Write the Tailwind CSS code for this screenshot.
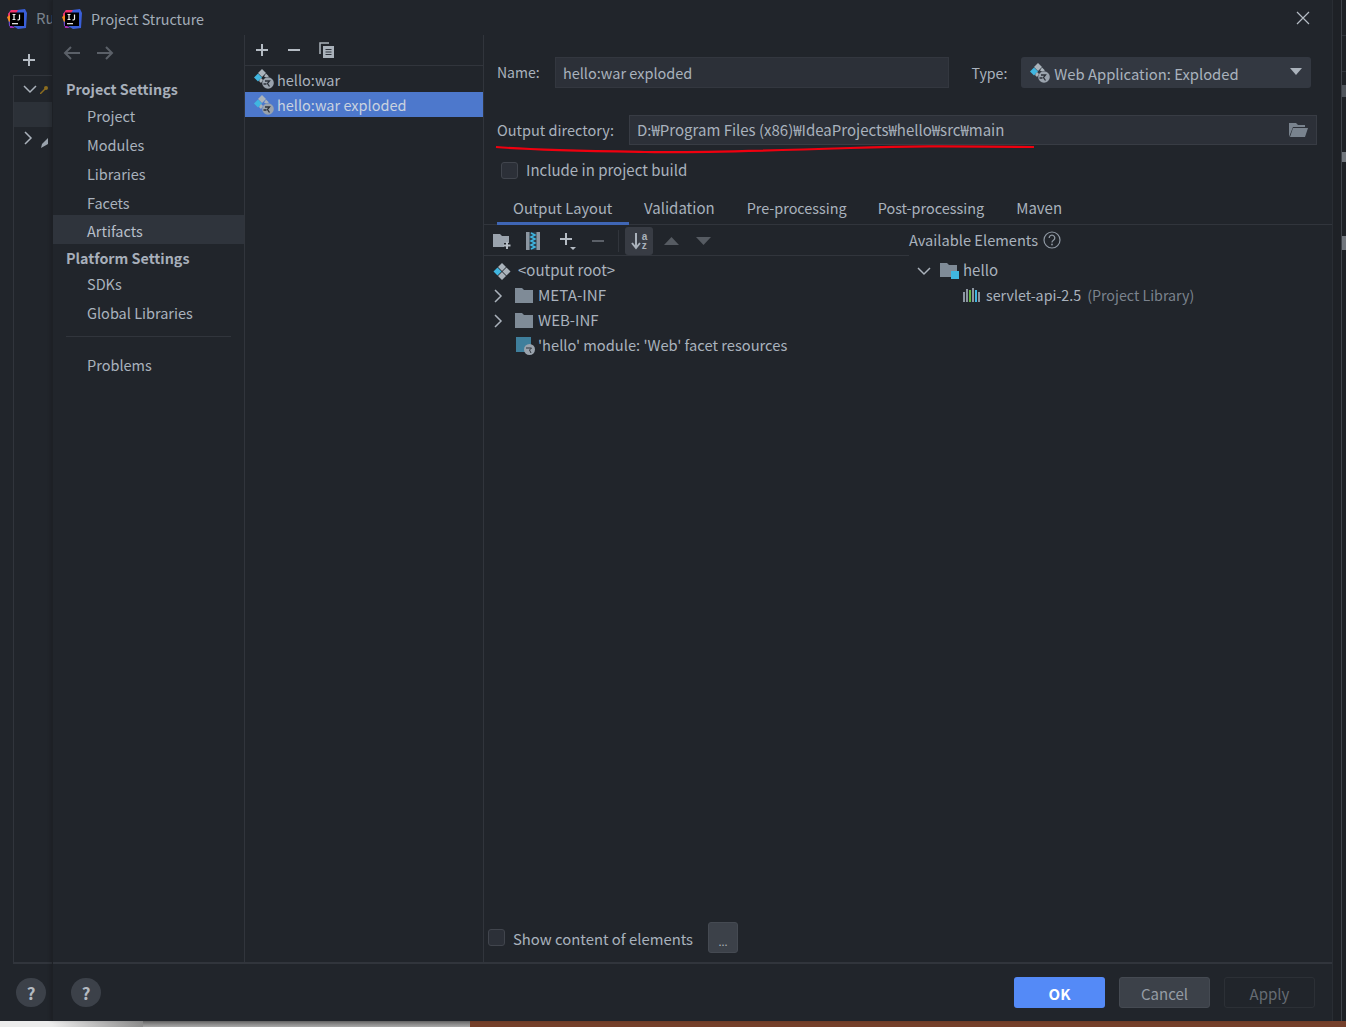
<!DOCTYPE html>
<html lang="en">
<head>
    <meta charset="UTF-8">
    <title>Project Structure</title>
    <script src="https://cdn.jsdelivr.net/npm/@tailwindcss/browser@4"></script>
</head>
<body class="bg-[#21252b] font-['Noto_Sans_CJK_KR','Noto_Sans',sans-serif] text-[14.5px] text-[#a9b2bd]">
    <svg class="hidden">
        <symbol id="idea" viewBox="0 0 20 20">
            <path d="M1 5 4 1h6l8-1 2 4-1 15-8 1-5-3H2z" fill="#3a5fd9"/>
            <path d="M1 5 4 1h7L5 11 1 10z" fill="#f0306a"/>
            <path d="M0 8l3-2 2 5-3 2z" fill="#f78a1f"/>
            <path d="M2 13l3 4 3 2H3z" fill="#a02fb5"/>
            <rect x="3" y="3.500" width="14" height="13.500" fill="#000"/>
            <rect x="5" y="14" width="6" height="1.300" fill="#ddd"/>
            <path d="M5.500 5.500h3M7 5.500v5M5.500 10.500h3M12.500 5.500v4.500q0 1-2 .8" stroke="#eee" stroke-width="1.200" fill="none"/>
        </symbol>
        <symbol id="artifact" viewBox="0 0 20 20">
            <path d="M8 0l4 4-4 4-4-4z" fill="#aab3bb"/>
            <path d="M4 4.500l4 4-4 4-4-4z" fill="#40b6e0"/>
            <path d="M12 4.500l3 3-3 1-2-1z" fill="#aab3bb"/>
            <path d="M7 9l2 2-2 3-2-2z" fill="#aab3bb"/>
            <circle cx="14" cy="14" r="5.800" fill="#9aa3ad"/>
            <path d="M11 12h4.500l-2 2.500 2 3M9.500 15h3" stroke="#2d323a" stroke-width="1.300" fill="none"/>
        </symbol>
        <symbol id="folder" viewBox="0 0 18 15">
            <path d="M0 0h7l2 2h9v13H0z" fill="#7f8b97"/>
        </symbol>
        <symbol id="chev-r" viewBox="0 0 10 14">
            <path d="M2 1l6 6-6 6" stroke="#aab2bb" stroke-width="1.500" fill="none"/>
        </symbol>
        <symbol id="chev-d" viewBox="0 0 14 10">
            <path d="M1 2l6 6 6-6" stroke="#aab2bb" stroke-width="1.500" fill="none"/>
        </symbol>
    </svg>

    <div class="relative w-[1346px] h-[1027px] overflow-hidden bg-[#21252b]">
        <!-- desktop strip under the windows -->
        <div class="absolute left-0 right-0 bottom-0 h-[6px] flex">
            <div class="w-[52px] bg-[#ececec]"></div>
            <div class="w-[91px] bg-linear-to-r from-[#ececec] to-[#8d8d8d]"></div>
            <div class="w-[327px] bg-linear-to-b from-[#6a6a6a] to-[#a8a8a8]"></div>
            <div class="flex-1 bg-[#75402b]"></div>
        </div>

        <!-- run config window behind the dialog -->
        <div class="absolute left-0 top-0 w-[1346px] h-[1021px] bg-[#21252b]">
            <div class="h-[35px] flex items-center pl-[7px] gap-[9px] pt-[2px]">
                <svg class="w-[20px] h-[20px]"><use href="#idea"/></svg>
                <span class="text-[#79828c] text-[15px]">Ru</span>
            </div>
            <svg class="absolute left-[22px] top-[53px] w-[14px] h-[14px]" viewBox="0 0 14 14"><path d="M7 1v12M1 7h12" stroke="#b5bcc4" stroke-width="2"/></svg>
            <div class="absolute left-[13px] top-[75px] w-[39px] h-[889px] border-l border-t border-b-2 border-[#31353c]">
                <div class="h-[26px] pl-[9px] flex items-center gap-[3px]">
                    <svg class="w-[14px] h-[10px]"><use href="#chev-d"/></svg>
                    <svg class="w-[8px] h-[8px] mt-[2px]" viewBox="0 0 8 8"><path d="M0 8l5-5" stroke="#8c6d1f" stroke-width="1.500"/><circle cx="6" cy="2" r="2" fill="#8c6d1f"/></svg>
                </div>
                <div class="h-[25px] bg-[#2c3138]"></div>
                <div class="h-[25px] pl-[9px] flex items-center gap-[8px]">
                    <svg class="w-[10px] h-[14px] mb-[3px]"><use href="#chev-r"/></svg>
                    <svg class="w-[8px] h-[10px] mt-[6px]" viewBox="0 0 8 10"><path d="M0 10l1-4 6-6v6z" fill="#9aa3ad"/></svg>
                </div>
            </div>
            <div class="absolute left-[16px] top-[978px] w-[30px] h-[29px] rounded-full bg-[#3c4149] flex items-center justify-center font-bold text-[17px] text-[#b4bac1]">?</div>
        </div>

        <!-- right strip pieces of the window behind -->
        <div class="absolute left-[1332px] top-0 w-[14px] h-[1021px] bg-[#1e2126] border-l border-[#2a2e34]">
            <div class="absolute left-[8px] top-0 h-full w-px bg-[#3f444b]"></div>
            <div class="absolute left-[9px] top-[35px] w-[5px] h-px bg-[#31353c]"></div>
            <div class="absolute left-[9px] top-[71px] w-[5px] h-px bg-[#31353c]"></div>
            <div class="absolute left-[9px] top-[85px] w-[4px] h-[12px] bg-[#50555c]"></div>
            <div class="absolute left-[9px] top-[152px] w-[4px] h-[10px] bg-[#71767d]"></div>
            <div class="absolute left-[9px] top-[236px] w-[4px] h-[14px] bg-[#71767d]"></div>
        </div>

        <!-- Project Structure dialog -->
        <div class="absolute left-[52px] top-0 w-[1280px] h-[1021px] bg-[#21252b] flex flex-col border-l border-[#1d2025] shadow-[-2px_0_3px_rgba(0,0,0,0.15)]">
            <div class="h-[35px] shrink-0 flex items-center pl-[9px] pr-[22px] pt-[2px]">
                <svg class="w-[20px] h-[20px]"><use href="#idea"/></svg>
                <span class="ml-[9px] pt-[1px] text-[#a3adb9] text-[14.300px]">Project Structure</span>
                <svg class="ml-auto mb-[2px] w-[14px] h-[14px]" viewBox="0 0 14 14"><path d="M1 1l12 12M13 1L1 13" stroke="#b5bcc4" stroke-width="1.200"/></svg>
            </div>

            <div class="flex-1 flex min-h-0 border-b-2 border-[#31353c]">
                <!-- sidebar -->
                <div class="w-[192px] shrink-0 border-r border-[#31353c] flex flex-col">
                    <div class="h-[36px] shrink-0 flex items-center pl-[10px] gap-[15px]">
                        <svg class="w-[18px] h-[14px]" viewBox="0 0 18 14"><path d="M17 7H2M8 1L2 7l6 6" stroke="#5b6068" stroke-width="2" fill="none"/></svg>
                        <svg class="w-[18px] h-[14px]" viewBox="0 0 18 14"><path d="M1 7h15M10 1l6 6-6 6" stroke="#5b6068" stroke-width="2" fill="none"/></svg>
                    </div>
                    <div class="pl-[13px] h-[29px] mt-[3px] flex items-center font-bold text-[14.300px] text-[#a7afba]">Project Settings</div>
                    <div class="pl-[34px] h-[26px] flex items-center">Project</div>
                    <div class="pl-[34px] h-[29px] mt-[1px] flex items-center">Modules</div>
                    <div class="pl-[34px] h-[29px] flex items-center">Libraries</div>
                    <div class="pl-[34px] h-[27px] pt-[3px] flex items-center">Facets</div>
                    <div class="pl-[34px] h-[29px] pt-[3px] flex items-center bg-[#2f343c] text-[#b7bfc9]">Artifacts</div>
                    <div class="pl-[13px] h-[29px] pb-[2px] flex items-center font-bold text-[14.300px] text-[#a7afba]">Platform Settings</div>
                    <div class="pl-[34px] h-[23px] pb-[2px] flex items-center">SDKs</div>
                    <div class="pl-[34px] h-[29px] mt-[2px] flex items-center">Global Libraries</div>
                    <div class="mx-[13px] mt-[9px] border-t border-[#31353c]"></div>
                    <div class="pl-[34px] h-[29px] mt-[14px] pb-[2px] flex items-center">Problems</div>
                </div>

                <!-- artifact list -->
                <div class="w-[239px] shrink-0 border-r border-[#31353c] flex flex-col">
                    <div class="h-[31px] shrink-0 border-b border-[#31353c] flex items-center pl-[10px] gap-[18px]">
                        <svg class="w-[14px] h-[14px]" viewBox="0 0 14 14"><path d="M7 1v12M1 7h12" stroke="#b5bcc4" stroke-width="2"/></svg>
                        <svg class="w-[14px] h-[14px]" viewBox="0 0 14 14"><path d="M1 7h12" stroke="#b5bcc4" stroke-width="2"/></svg>
                        <svg class="w-[16px] h-[16px]" viewBox="0 0 16 16"><path d="M1 12V1h9" stroke="#aab2bb" stroke-width="1.500" fill="none"/><path d="M4 4h11v12H4z" fill="#aab2bb"/><path d="M6.500 7.500h6M6.500 10h6M6.500 12.500h6" stroke="#2d323a"/></svg>
                    </div>
                    <div class="h-[26px] pl-[9px] flex items-center gap-[3px]">
                        <svg class="w-[20px] h-[20px]"><use href="#artifact"/></svg><span class="pt-[2px]">hello:war</span>
                    </div>
                    <div class="h-[25px] pl-[9px] flex items-center gap-[3px] bg-[#4d78cc] text-[#c9d2df]">
                        <svg class="w-[20px] h-[20px]"><use href="#artifact"/></svg>hello:war exploded
                    </div>
                </div>

                <!-- artifact detail -->
                <div class="flex-1 min-w-0 flex flex-col">
                    <div class="pl-[13px] pr-[21px] mt-[22px] h-[31px] flex items-center">
                        <span class="w-[58px] text-[14px]">Name:</span>
                        <div class="w-[395px] h-full bg-[#2c3038] border border-[#33373f] pl-[7px] flex items-center">hello:war exploded</div>
                        <span class="ml-[22px] w-[50px] pt-[2px] text-[14.200px]">Type:</span>
                        <div class="w-[290px] h-full rounded-[3px] bg-[#333841] pl-[9px] pr-[9px] flex items-center gap-[4px]">
                            <svg class="w-[20px] h-[20px]"><use href="#artifact"/></svg>
                            <span class="pt-[4px] text-[14.800px]">Web Application: Exploded</span>
                            <svg class="ml-auto w-[12px] h-[7px] mb-[3px]" viewBox="0 0 12 7"><path d="M0 0h12L6 7z" fill="#aab2bb"/></svg>
                        </div>
                    </div>
                    <div class="pl-[13px] pr-[15px] mt-[27px] h-[30px] flex items-center">
                        <span class="w-[132px]">Output directory:</span>
                        <div class="flex-1 h-full bg-[#2c3038] border border-[#383c44] pl-[7px] pr-[8px] flex items-center text-[15px]">
                            <span>D:₩Program Files (x86)₩IdeaProjects₩hello₩src₩main</span>
                            <svg class="ml-auto w-[19px] h-[14px]" viewBox="0 0 19 14"><path d="M0 14V0h7l2 2h7v2H4z" fill="#79838e"/><path d="M4 5h15l-3 9H1z" fill="#79838e"/></svg>
                        </div>
                    </div>
                    <div class="pl-[17px] mt-[15px] h-[21px] flex items-center gap-[8px] text-[15px]">
                        <span class="w-[17px] h-[17px] rounded-[3px] bg-[#2c3038] border border-[#41454d]"></span>
                        <span>Include in project build</span>
                    </div>

                    <!-- tabs -->
                    <div class="mt-[5px] h-[39px] pl-[13px] flex items-end border-b border-[#31353c] shrink-0">
                        <div class="w-[132px] h-[29px] pl-[16px] pt-[1px] text-[14.700px] border-b-[3px] border-[#3f66b5] relative top-[1px]">Output Layout</div>
                        <div class="ml-[15px] h-[29px] pt-[2px] text-[15px]">Validation</div>
                        <div class="ml-[32px] h-[29px] pt-[2px] text-[14.400px]">Pre-processing</div>
                        <div class="ml-[31px] h-[29px] pt-[2px] text-[14.450px]">Post-processing</div>
                        <div class="ml-[32px] h-[29px] pt-[2px] text-[15px]">Maven</div>
                    </div>

                    <div class="flex-1 min-h-0 flex">
                        <!-- output tree -->
                        <div class="w-[425px] shrink-0 flex flex-col">
                            <div class="h-[31px] shrink-0 pt-[1px] border-b border-[#31353c] flex items-center pl-[9px]">
                                <svg class="w-[18px] h-[16px]" viewBox="0 0 18 16"><path d="M0 1h7l2 2h7v7h-5v4H0z" fill="#9aa3ad"/><path d="M14 9v7M10.500 12.500h7" stroke="#b5bcc4" stroke-width="2"/></svg>
                                <svg class="ml-[15px] w-[14px] h-[18px]" viewBox="0 0 14 18"><rect width="14" height="18" fill="#8c96a1"/><rect x="3.500" width="7" height="18" fill="#2a3a47"/><path d="M5 1l4 2-4 2 4 2-4 2 4 2-4 2 4 2-4 2" stroke="#40b6e0" stroke-width="1.500" fill="none"/></svg>
                                <svg class="ml-[19px] w-[19px] h-[18px]" viewBox="0 0 19 18"><path d="M7 1v12M1 7h12" stroke="#b5bcc4" stroke-width="2"/><path d="M11 15h6l-3 3z" fill="#b5bcc4"/></svg>
                                <svg class="ml-[13px] w-[14px] h-[14px]" viewBox="0 0 14 14"><path d="M1 7h12" stroke="#5b6068" stroke-width="2"/></svg>
                                <span class="ml-[13px] w-px h-[22px] bg-[#31353c]"></span>
                                <div class="ml-[6px] w-[28px] h-[28px] rounded-[3px] bg-[#383c44] flex items-center justify-center gap-[1px]">
                                    <svg class="w-[10px] h-[18px]" viewBox="0 0 10 18"><path d="M5 1v14M1 11l4 5 4-5" stroke="#aab2bb" stroke-width="2" fill="none"/></svg>
                                    <div class="flex flex-col font-bold text-[10px] leading-[9px] text-[#aab2bb] font-['Liberation_Sans',sans-serif]"><span>a</span><span>z</span></div>
                                </div>
                                <svg class="ml-[11px] w-[15px] h-[8px]" viewBox="0 0 15 8"><path d="M0 8L7.500 0 15 8z" fill="#565b62"/></svg>
                                <svg class="ml-[17px] w-[15px] h-[8px]" viewBox="0 0 15 8"><path d="M0 0h15L7.500 8z" fill="#565b62"/></svg>
                            </div>
                            <div class="h-[25px] mt-[2px] pl-[9px] flex items-center text-[15px]">
                                <svg class="w-[18px] h-[18px]" viewBox="0 0 18 18"><path d="M9 1l4 4-4 4-4-4z" fill="#aab3bb"/><path d="M4.500 5.500l4 4-4 4-4-4z" fill="#40b6e0"/><path d="M13.500 5.500l4 4-4 4-4-4z" fill="#aab3bb"/><path d="M9 10l4 4-4 4-4-4z" fill="#aab3bb"/></svg>
                                <span class="ml-[7px]">&lt;output root&gt;</span>
                            </div>
                            <div class="h-[25px] pl-[9px] flex items-center text-[15.200px]">
                                <svg class="w-[10px] h-[14px]"><use href="#chev-r"/></svg>
                                <svg class="ml-[12px] w-[18px] h-[15px]"><use href="#folder"/></svg>
                                <span class="ml-[5px] pb-[2px]">META-INF</span>
                            </div>
                            <div class="h-[25px] pl-[9px] flex items-center text-[15px]">
                                <svg class="w-[10px] h-[14px]"><use href="#chev-r"/></svg>
                                <svg class="ml-[12px] w-[18px] h-[15px]"><use href="#folder"/></svg>
                                <span class="ml-[5px]">WEB-INF</span>
                            </div>
                            <div class="h-[25px] pl-[32px] flex items-center text-[14.700px]">
                                <svg class="w-[20px] h-[18px]" viewBox="0 0 20 18"><rect width="15" height="15" fill="#3f7f9c"/><circle cx="13.500" cy="12.500" r="5.500" fill="#9aa3ad"/><path d="M10 11h5.500l-2 2 1.500 3" stroke="#2d323a" fill="none"/></svg>
                                <span class="ml-[2px]">'hello' module: 'Web' facet resources</span>
                            </div>
                            <div class="mt-auto mb-[9px] pl-[4px] flex items-center">
                                <span class="w-[17px] h-[17px] rounded-[3px] bg-[#2c3038] border border-[#41454d]"></span>
                                <span class="ml-[8px] pt-[4px] text-[14.850px]">Show content of elements</span>
                                <div class="ml-[15px] w-[30px] h-[31px] rounded-[3px] bg-[#3c4149] border border-[#454a52] flex items-end justify-center text-[11px] pb-[3px]">...</div>
                            </div>
                        </div>

                        <!-- available elements -->
                        <div class="flex-1 min-w-0">
                            <div class="h-[31px] flex items-center gap-[5px] text-[14.650px]">
                                <span class="pb-[2px]">Available Elements</span>
                                <svg class="w-[18px] h-[18px] mb-[1px]" viewBox="0 0 18 18"><circle cx="9" cy="9" r="8" fill="none" stroke="#8f98a3" stroke-width="1.200"/><path d="M6.200 7a2.800 2.800 0 1 1 4.300 2.300C9.500 10 9 10.500 9 11.500" stroke="#8f98a3" stroke-width="1.300" fill="none"/><circle cx="9" cy="13.500" r=".9" fill="#8f98a3"/></svg>
                            </div>
                            <div class="h-[25px] mt-[2px] pl-[8px] flex items-center text-[15px]">
                                <svg class="w-[14px] h-[10px]"><use href="#chev-d"/></svg>
                                <svg class="ml-[9px] w-[19px] h-[16px]" viewBox="0 0 19 16"><path d="M0 0h7l2 2h8v12H0z" fill="#7f8b97"/><rect x="11" y="8" width="8" height="8" fill="#40b6e0"/></svg>
                                <span class="ml-[4px]">hello</span>
                            </div>
                            <div class="h-[25px] pl-[54px] flex items-center text-[14.250px]">
                                <svg class="w-[18px] h-[15px]" viewBox="0 0 18 15"><rect x="0" y="4" width="2" height="10" fill="#8c96a1"/><rect x="3" y="1" width="2" height="13" fill="#8c96a1"/><rect x="6" y="2" width="2" height="12" fill="#62b543"/><rect x="9" y="0" width="2" height="14" fill="#8c96a1"/><rect x="12" y="2" width="2" height="12" fill="#40b6e0"/><rect x="15" y="4" width="2" height="10" fill="#8c96a1"/></svg>
                                <span class="ml-[5px] pb-[2px]">servlet-api-2.5</span>
                                <span class="ml-[6px] pb-[2px] text-[#7b838d]">(Project Library)</span>
                            </div>
                        </div>
                    </div>
                </div>
            </div>

            <!-- footer -->
            <div class="h-[57px] shrink-0 flex items-center pl-[18px] pr-[17px] text-[15px]">
                <div class="w-[30px] h-[29px] rounded-full bg-[#3c4149] flex items-center justify-center font-bold text-[17px] text-[#b4bac1]">?</div>
                <button class="ml-auto w-[91px] h-[31px] pt-[4px] rounded-[3px] bg-[#548af7] text-white font-bold">OK</button>
                <button class="ml-[14px] w-[91px] h-[31px] pt-[4px] rounded-[3px] bg-[#3c4149] border border-[#454a52] text-[#959ca5]">Cancel</button>
                <button class="ml-[14px] w-[91px] h-[31px] pt-[4px] rounded-[3px] border border-[#2c3036] text-[#666c74]">Apply</button>
            </div>
        </div>

        <!-- red underline drawn on top of the screenshot -->
        <svg class="absolute left-[490px] top-[140px] w-[550px] h-[16px]" viewBox="0 0 550 16"><path d="M6 7C40 10 100 11 155 12S300 10 360 8 450 6 544 7" stroke="#f0000f" stroke-width="2.200" fill="none"/></svg>
    </div>
</body>
</html>
